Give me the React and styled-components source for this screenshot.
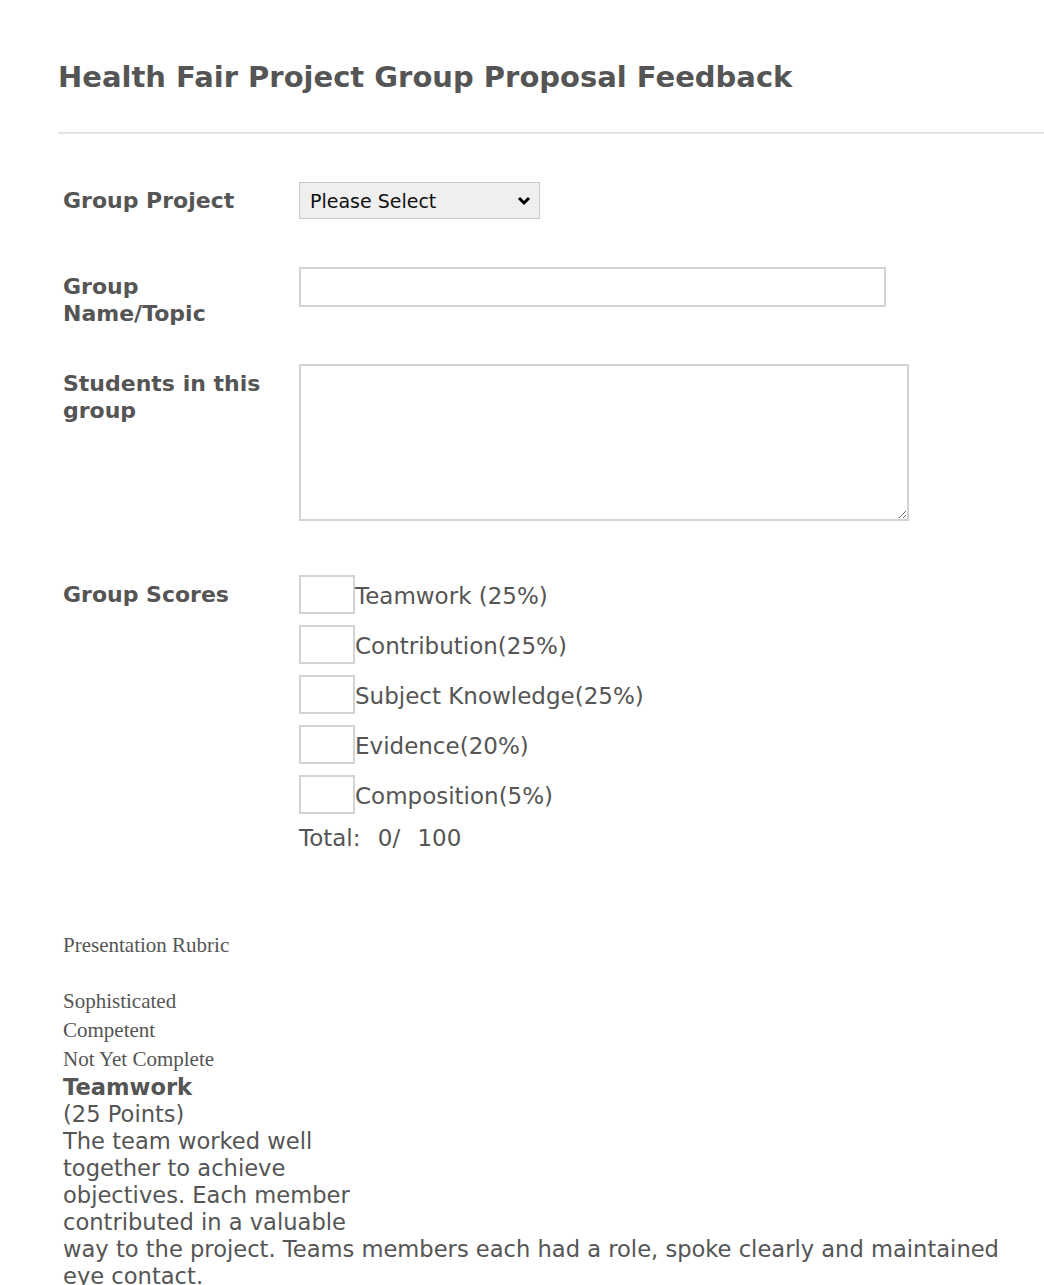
import React from "react";
import styled, { createGlobalStyle } from "styled-components";

const Global = createGlobalStyle`
  html, body { margin: 0; padding: 0; background: #fff; }
  body { font-family: "DejaVu Sans", Verdana, sans-serif; color: #555; }
`;

const Page = styled.div`
  width: 1044px;
  overflow: hidden;
  padding-top: 58px;
`;

const Header = styled.div`
  padding-left: 58px;
`;

const Title = styled.h1`
  margin: 0;
  font-size: 29px;
  font-weight: bold;
  line-height: 38px;
  color: #555;
`;

const Divider = styled.hr`
  margin: 36px 0 0 0;
  border: 0;
  border-top: 2px solid #e3e3e3;
  width: 1100px;
`;

const Form = styled.div`
  padding-left: 63px;
  padding-top: 48px;
  display: flex;
  flex-direction: column;
`;

const Row = styled.div`
  display: grid;
  grid-template-columns: 236px 1fr;
  margin-bottom: ${(p) => p.$gap || 0}px;
`;

const Label = styled.div`
  font-size: 22px;
  font-weight: bold;
  line-height: 27px;
  color: #555;
  padding-top: ${(p) => p.$top || 0}px;
  width: ${(p) => p.$w || 220}px;
`;

const Select = styled.select`
  width: 241px;
  height: 37px;
  font-family: "DejaVu Sans", Verdana, sans-serif;
  font-size: 19px;
  color: #111;
  background-color: #efefef;
  border: 1px solid #c8c8c8;
  border-radius: 0;
  padding: 0 8px 0 10px;
  appearance: none;
  -webkit-appearance: none;
  background-image: url("data:image/svg+xml;utf8,<svg xmlns='http://www.w3.org/2000/svg' width='14' height='10' viewBox='0 0 14 10'><path d='M2 2l5 5 5-5' fill='none' stroke='black' stroke-width='3'/></svg>");
  background-repeat: no-repeat;
  background-position: right 8px center;
`;

const TextInput = styled.input`
  box-sizing: border-box;
  width: 587px;
  height: 40px;
  border: 2px solid #d3d3d3;
  background: #fff;
  padding: 0 8px;
  font-size: 19px;
`;

const TextArea = styled.textarea`
  box-sizing: border-box;
  width: 610px;
  height: 157px;
  border: 2px solid #d3d3d3;
  background: #fff;
  display: block;
  font-size: 19px;
`;

const Scores = styled.div`
  display: flex;
  flex-direction: column;
  gap: 11px;
`;

const ScoreRow = styled.div`
  display: flex;
  align-items: center;
  height: 39px;
`;

const ScoreBox = styled.input`
  box-sizing: border-box;
  width: 56px;
  height: 39px;
  border: 2px solid #d3d3d3;
  background: #fff;
  margin: 0;
`;

const ScoreLabel = styled.span`
  font-size: 23px;
  color: #555;
  line-height: 30px;
  padding-top: 3px;
`;

const Total = styled.div`
  font-size: 23px;
  color: #555;
  line-height: 30px;
  margin-top: 9px;
  word-spacing: 10px;
`;

const Rubric = styled.div`
  padding-left: 63px;
  margin-top: 78px;
`;

const SerifLine = styled.div`
  font-family: "Liberation Serif", "Times New Roman", serif;
  font-size: 21px;
  line-height: 29px;
  color: #555;
  margin-bottom: ${(p) => p.$gap || 0}px;
`;

const Criterion = styled.div`
  font-size: 22.6px;
  line-height: 27px;
  color: #555;
  width: ${(p) => p.$w || "auto"};
  padding-right: 20px;
  font-weight: ${(p) => (p.$bold ? "bold" : "normal")};
`;

const scores = [
  "Teamwork (25%)",
  "Contribution(25%)",
  "Subject Knowledge(25%)",
  "Evidence(20%)",
  "Composition(5%)",
];

export default function App() {
  return (
    <Page>
      <Global />
      <Header>
        <Title>Health Fair Project Group Proposal Feedback</Title>
        <Divider />
      </Header>
      <Form>
        <Row $gap={48}>
          <Label $top={5}>Group Project</Label>
          <div>
            <Select defaultValue="">
              <option value="">Please Select</option>
            </Select>
          </div>
        </Row>
        <Row $gap={37}>
          <Label $top={6} $w={180}>Group Name/Topic</Label>
          <div>
            <TextInput type="text" />
          </div>
        </Row>
        <Row $gap={54}>
          <Label $top={6} $w={220}>Students in this group</Label>
          <div>
            <TextArea />
          </div>
        </Row>
        <Row>
          <Label $top={6}>Group Scores</Label>
          <div>
            <Scores>
              {scores.map((s) => (
                <ScoreRow key={s}>
                  <ScoreBox type="text" />
                  <ScoreLabel>{s}</ScoreLabel>
                </ScoreRow>
              ))}
            </Scores>
            <Total>Total: 0/ 100</Total>
          </div>
        </Row>
      </Form>
      <Rubric>
        <SerifLine $gap={27}>Presentation Rubric</SerifLine>
        <SerifLine>Sophisticated</SerifLine>
        <SerifLine>Competent</SerifLine>
        <SerifLine>Not Yet Complete</SerifLine>
        <Criterion $bold>Teamwork</Criterion>
        <Criterion>(25 Points)</Criterion>
        <Criterion $w="300px">
          The team worked well together to achieve objectives. Each member contributed in a valuable
        </Criterion>
        <Criterion>
          way to the project. Teams members each had a role, spoke clearly and maintained eye contact.
        </Criterion>
      </Rubric>
    </Page>
  );
}
